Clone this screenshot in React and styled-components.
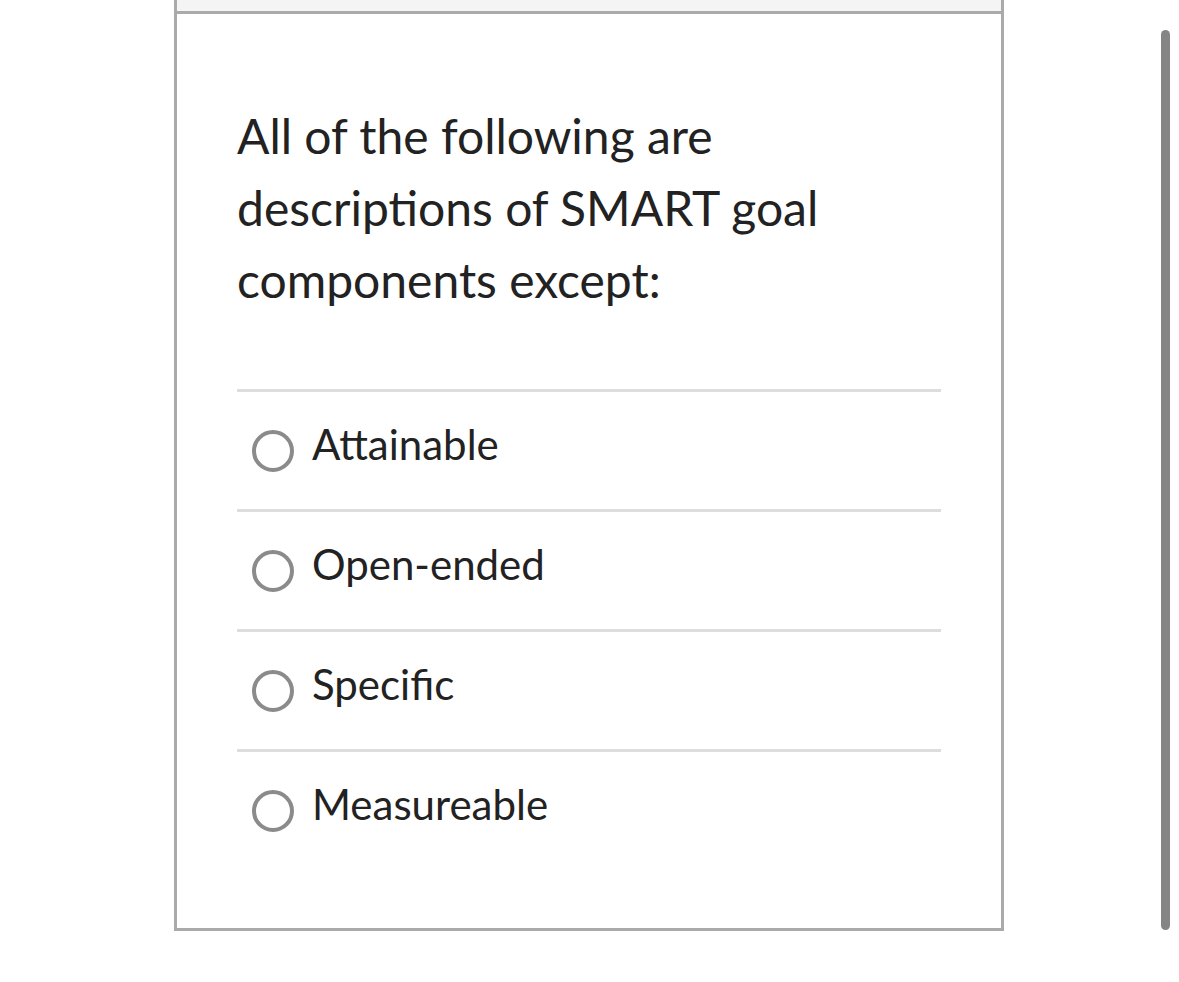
import React from "react";
import styled, { createGlobalStyle } from "styled-components";

const Global = createGlobalStyle`
  html, body { margin: 0; padding: 0; background: #fff; }
  body { font-family: Lato, "Open Sans", Arial, sans-serif; }
`;

const Page = styled.div`
  padding-left: 174px;
  min-height: 982px;
  box-sizing: border-box;
`;

const Card = styled.div`
  width: 830px;
  box-sizing: border-box;
  border: 3px solid #aaaaaa;
  border-top: none;
  background: #fff;
`;

const Header = styled.div`
  height: 11px;
  background: #f4f4f4;
  border-bottom: 3px solid #aaaaaa;
`;

const Body = styled.div`
  padding: 86px 60px 59px;
`;

const Question = styled.div`
  font-size: 48px;
  line-height: 72px;
  color: #222;
  width: 620px;
`;

const Answers = styled.div`
  margin-top: 73px;
  display: flex;
  flex-direction: column;
`;

const Row = styled.label`
  display: flex;
  align-items: center;
  gap: 18px;
  height: 117px;
  border-top: 3px solid #dddddd;
  padding-left: 15px;
`;

const Radio = styled.span`
  width: 42px;
  height: 42px;
  box-sizing: border-box;
  border: 4px solid #8b8b8b;
  border-radius: 50%;
  flex: none;
`;

const Label = styled.span`
  font-size: 42px;
  color: #222;
  padding-bottom: 14px;
`;

const Scrollbar = styled.div`
  position: fixed;
  left: 1161px;
  top: 30px;
  width: 9px;
  height: 900px;
  border-radius: 5px;
  background: #858585;
`;

const options = ["Attainable", "Open-ended", "Specific", "Measureable"];

export default function App() {
  return (
    <>
      <Global />
      <Page>
        <Card>
          <Header />
          <Body>
            <Question>
              All of the following are descriptions of SMART goal components except:
            </Question>
            <Answers>
              {options.map((o) => (
                <Row key={o}>
                  <Radio />
                  <Label>{o}</Label>
                </Row>
              ))}
            </Answers>
          </Body>
        </Card>
      </Page>
      <Scrollbar />
    </>
  );
}
